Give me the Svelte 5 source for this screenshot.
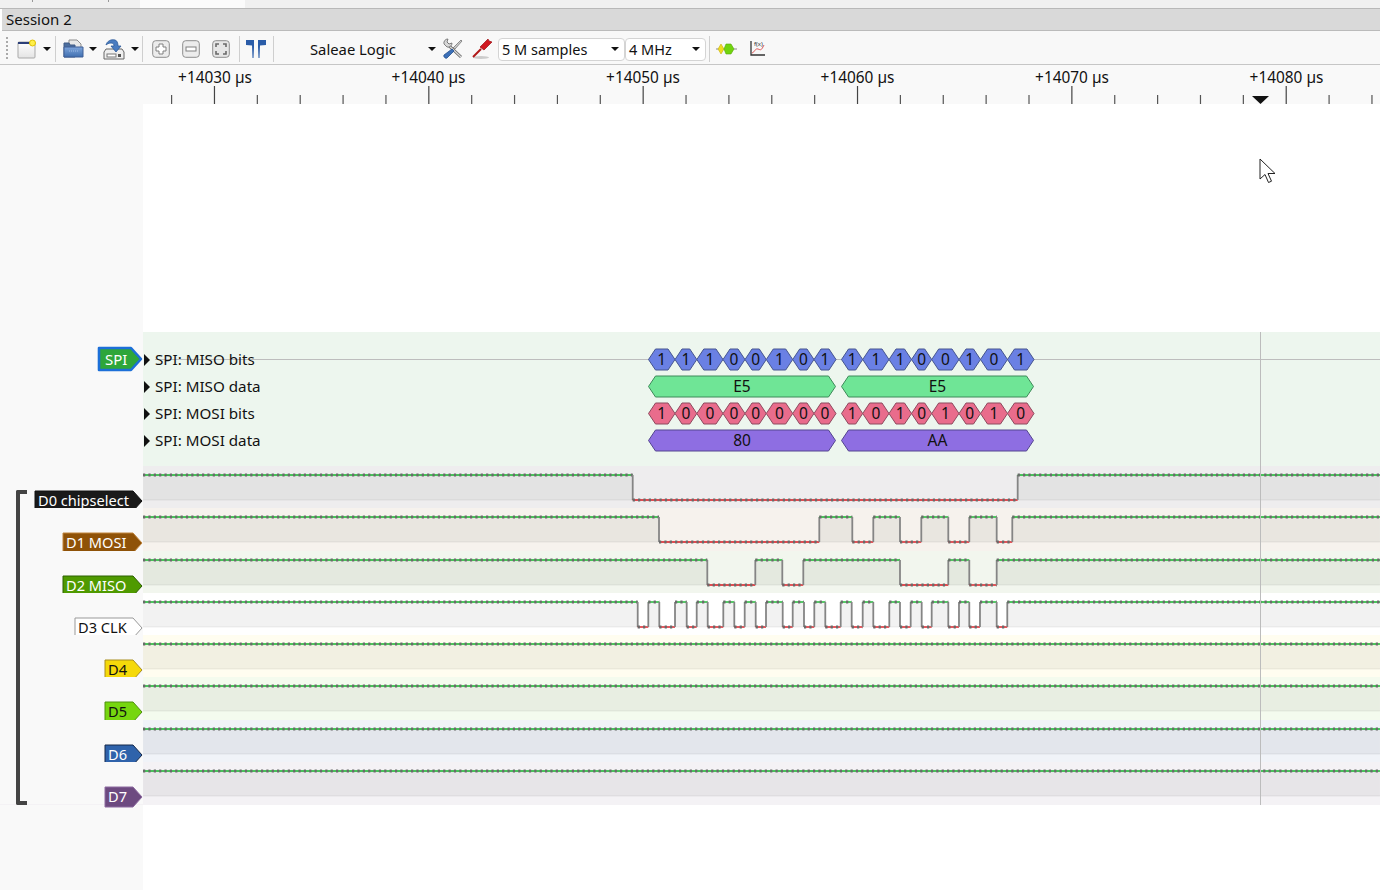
<script>
  const LEFT = 143;
  const ROW_H = 42.3;
  const HIGH_Y = 9;
  const LOW_Y = 34;

  // ruler: one minor tick every 2 us
  const ticks = [];
  for (let i = 0; i < 29; i++) {
    const x = 171.6 + i * 42.87;
    ticks.push({ x, major: (i - 1) % 5 === 0 });
  }
  const rulerLabels = [
    { x: 215, text: '+14030 µs' },
    { x: 428.5, text: '+14040 µs' },
    { x: 643, text: '+14050 µs' },
    { x: 857.5, text: '+14060 µs' },
    { x: 1072, text: '+14070 µs' },
    { x: 1286.5, text: '+14080 µs' }
  ];

  const bitEdges = [648.5, 675, 696.8, 723, 745, 766.3, 792.7, 814, 836];
  const bitEdges2 = [841.5, 862.7, 889, 911.5, 931.7, 959, 980.5, 1007.5, 1034];

  function bits(str, edges) {
    return str.split('').map((text, i) => ({ text, x0: edges[i], x1: edges[i + 1] }));
  }

  const analyzers = [
    {
      name: 'SPI: MISO bits', kind: 'bits', line: true,
      cells: [...bits('11100101', bitEdges), ...bits('11100101', bitEdges2)]
    },
    {
      name: 'SPI: MISO data', kind: 'miso',
      cells: [{ text: 'E5', x0: 648.5, x1: 835.5 }, { text: 'E5', x0: 841.5, x1: 1033.5 }]
    },
    {
      name: 'SPI: MOSI bits', kind: 'mosi',
      cells: [...bits('10000000', bitEdges), ...bits('10101010', bitEdges2)]
    },
    {
      name: 'SPI: MOSI data', kind: 'data',
      cells: [{ text: '80', x0: 648.5, x1: 835.5 }, { text: 'AA', x0: 841.5, x1: 1033.5 }]
    }
  ];

  const channels = [
    { label: 'D0 chipselect', w: 109, tag: 'black', band: 'b0', edges: [632.7, 1017.7] },
    {
      label: 'D1 MOSI', w: 81, tag: 'brown', band: 'b1',
      edges: [659, 819.3, 852.3, 873.3, 900, 921.3, 948.3, 969.3, 996.7, 1012.3]
    },
    {
      label: 'D2 MISO', w: 81, tag: 'green', band: 'b2',
      edges: [707.3, 755.3, 782.3, 803.3, 900, 948.3, 969.3, 996.7]
    },
    {
      label: 'D3 CLK', w: 69, tag: 'white', band: 'b3',
      edges: [
        637.7, 648.3, 659.3, 675, 686.7, 696.7, 707.7, 723.3, 734.3, 744.7, 755.7, 766, 782.7, 792.7, 804, 814.3,
        825.3, 840.7, 851.7, 862.7, 873.3, 889.3, 900, 910.7, 921.7, 931.7, 948.3, 959, 969.3, 980, 996.7, 1007.3
      ]
    },
    { label: 'D4', w: 39, tag: 'yellow', band: 'b4', edges: [] },
    { label: 'D5', w: 39, tag: 'lime', band: 'b5', edges: [] },
    { label: 'D6', w: 39, tag: 'blue', band: 'b6', edges: [] },
    { label: 'D7', w: 39, tag: 'purple', band: 'b7', edges: [] }
  ];

  // channels all idle high, every edge in the list toggles the level
  function segments(edges) {
    const out = [];
    let from = LEFT;
    let high = true;
    for (const x of [...edges, 1380]) {
      out.push({ x0: from, x1: x, high });
      from = x;
      high = !high;
    }
    return out;
  }

  function hexPoints(c) {
    const tip = 7;
    const t = 3;
    const b = 24;
    const m = 13.5;
    return `${c.x0},${m} ${c.x0 + tip},${t} ${c.x1 - tip},${t} ${c.x1},${m} ${c.x1 - tip},${b} ${c.x0 + tip},${b}`;
  }

  function tagPoints(w) {
    return `1,1 ${w - 10},1 ${w - 1},11 ${w - 10},21 1,21`;
  }
</script>

<div class="app">
  <div class="tabs"><span class="tab-mark one"></span><span class="tab-mark two"></span><div class="tab-on"></div></div>
  <div class="session">Session 2</div>

  <div class="toolbar">
    <span class="grip"></span>
    <svg class="i-new" width="20" height="20" viewBox="0 0 20 20">
      <defs>
        <linearGradient id="pg" x1="0" y1="0" x2="0" y2="1"><stop offset="0" stop-color="#fff" /><stop offset="1" stop-color="#e4e4e4" /></linearGradient>
        <linearGradient id="fd" x1="0" y1="0" x2="0" y2="1"><stop offset="0" stop-color="#7fa6dc" /><stop offset="1" stop-color="#3f6fb0" /></linearGradient>
      </defs>
      <rect x="1" y="3" width="17" height="16" rx="1" fill="url(#pg)" stroke="#a9a9a9" />
      <path d="M1 4h15" stroke="#2b3f78" stroke-width="2" />
      <circle cx="15.5" cy="4" r="3" fill="#fff04a" stroke="#e0c000" />
    </svg>
    <span class="caret c-new"></span>
    <span class="sep s1"></span>
    <svg class="i-open" width="21" height="20" viewBox="0 0 21 20">
      <path d="M6 1h8l4 4v4H6z" fill="#e8e8e8" stroke="#8c8c8c" />
      <path d="M1 4h5l1 2h5v12H1z" fill="#4d6f9e" stroke="#3e5a85" />
      <path d="M1 8h19v10H1z" fill="url(#fd)" stroke="#3e5f96" />
      <path d="M6 12h10" stroke="#9dbbe5" stroke-dasharray="1 1" />
    </svg>
    <span class="caret c-open"></span>
    <svg class="i-save" width="22" height="22" viewBox="0 0 22 22">
      <path d="M3 11h16l2 3v7H1v-7z" fill="#efefef" stroke="#666" />
      <rect x="4" y="16" width="9" height="3" fill="#fff" stroke="#777" />
      <rect x="15" y="16" width="3" height="3" fill="#555" />
      <path d="M3 7c1-4 5-6 9-5 2 .5 3 3 3 6h3l-5 6-5-6h3c0-2-1-3-3-3-2 0-4 1-5 2z" fill="#4a7cc0" stroke="#2d5a99" stroke-width=".8" />
    </svg>
    <span class="caret c-save"></span>
    <span class="sep s2"></span>
    <svg class="zoom z1" width="18" height="18" viewBox="0 0 18 18">
      <rect x=".7" y=".7" width="16.6" height="16.6" rx="3" fill="#ececec" stroke="#8e8e8e" />
      <path d="M7 4h4v3h3v4h-3v3H7v-3H4V7h3z" fill="#fff" stroke="#808080" />
    </svg>
    <svg class="zoom z2" width="18" height="18" viewBox="0 0 18 18">
      <rect x=".7" y=".7" width="16.6" height="16.6" rx="3" fill="#ececec" stroke="#8e8e8e" />
      <rect x="4" y="7" width="10" height="4" fill="#fff" stroke="#808080" />
    </svg>
    <svg class="zoom z3" width="18" height="18" viewBox="0 0 18 18">
      <rect x=".7" y=".7" width="16.6" height="16.6" rx="3" fill="#e6e6e6" stroke="#8e8e8e" />
      <path d="M4 7V4h3M11 4h3v3M14 11v3h-3M7 14H4v-3" fill="none" stroke="#6a6a6a" stroke-width="1.6" />
    </svg>
    <span class="sep s3"></span>
    <svg class="i-flags" width="23" height="20" viewBox="0 0 23 20">
      <path d="M1 1h8v7l-.5 11h-1L7 6.500 1 6z" fill="#2a5ca8" />
      <path d="M13 1h8v5l-6 .5-.5 12.500h-1L13 8z" fill="#2a5ca8" />
    </svg>
    <span class="sep s4"></span>
    <div class="device"><span>Saleae Logic</span><span class="caret"></span></div>
    <svg class="i-tools" width="22" height="22" viewBox="0 0 22 22">
      <path d="M3 4l16 15" stroke="#666" stroke-width="3" />
      <path d="M3 4l16 15" stroke="#ddd" stroke-width="1.2" />
      <path d="M2 6a4 4 0 0 1 4-5L5 4l2 2 3-1a4 4 0 0 1-5 4z" fill="#d8d8d8" stroke="#666" stroke-width=".8" />
      <path d="M19 2l1 1-7 8-2-1z" fill="#ccc" stroke="#666" stroke-width=".7" />
      <path d="M10 11l2 2-7 7c-1 1-4-1-3-3z" fill="#3c70b8" stroke="#234f8d" stroke-width=".8" />
    </svg>
    <svg class="i-probe" width="22" height="22" viewBox="0 0 22 22">
      <ellipse cx="9" cy="19.500" rx="8" ry="1.500" fill="#ccc" />
      <path d="M1 19l8-8" stroke="#b01818" stroke-width="2" />
      <path d="M8 9l6-6 2-2 1 2 3 1-2 2-6 6z" fill="#d01820" stroke="#9a1014" stroke-width=".7" />
    </svg>
    <div class="combo samples"><span>5 M samples</span><span class="caret"></span></div>
    <div class="combo rate"><span>4 MHz</span><span class="caret"></span></div>
    <span class="sep s5"></span>
    <svg class="i-analyzer" width="21" height="12" viewBox="0 0 21 12">
      <path d="M0 6h21" stroke="#8a8a8a" />
      <path d="M5 1l3 5-3 5-3-5z" fill="#f0dc20" stroke="#c8b010" stroke-width=".6" />
      <path d="M10 1h5l3 5-3 5h-5L8 6z" fill="#71d40e" stroke="#58aa08" stroke-width=".6" />
    </svg>
    <svg class="i-fx" width="18" height="18" viewBox="0 0 18 18">
      <path d="M3 1v14h14" fill="none" stroke="#333" stroke-width="1.3" />
      <path d="M4 13c3-1 3-5 6-4s3 2 6-4" fill="none" stroke="#e05a5a" />
      <text x="6" y="6" class="fx">f(x)</text>
    </svg>
  </div>

  <div class="view">
    <div class="row">
      <div class="rail"></div>
      <svg class="ruler" width="1237" height="39" viewBox="{LEFT} 65 1237 39">
        {#each rulerLabels as l}
          <text x={l.x} y="83" text-anchor="middle" class="tick-text">{l.text}</text>
        {/each}
        {#each ticks as t}
          <path d="M{t.x} {t.major ? 86 : 95}V104" stroke={t.major ? '#444' : '#555'} stroke-width="1.2" />
        {/each}
        <path d="M1252 96h17l-8.500 8z" fill="#111" />
      </svg>
    </div>

    <div class="row empty">
      <div class="rail"></div>
      <div class="lane">
        <svg class="pointer" width="18" height="27" viewBox="0 0 18 27">
          <path d="M1 1v20l5-4.500 3.500 8 3-1.300-3.500-7.700h7z" fill="#fff" stroke="#222" stroke-width="1" />
        </svg>
      </div>
    </div>

    <div class="signals">
      <div class="row"><div class="rail"></div><div class="lane band-top"></div></div>
      {#each analyzers as a, i}
        <div class="row">
          <div class="rail spi-rail">
            {#if i === 0}
              <svg width="46" height="26" viewBox="0 0 46 26" class="spi-tag">
                <polygon points="2,2 34,2 44,13 34,24 2,24" fill="#2ea63a" stroke="#1c6fd8" stroke-width="2.600" stroke-linejoin="round" />
                <text x="8" y="18.500" fill="#fff">SPI</text>
              </svg>
            {/if}
          </div>
          <div class="lane analyzer">
            {#if a.line}<span class="base"></span>{/if}
            <span class="arrow"></span>
            <span class="name">{a.name}</span>
            <svg class="cells" width="1237" height="27" viewBox="{LEFT} 0 1237 27">
              {#each a.cells as c}
                <polygon points={hexPoints(c)} class={a.kind} />
                <text x={(c.x0 + c.x1) / 2} y="19" text-anchor="middle" class="cell-text">{c.text}</text>
              {/each}
            </svg>
          </div>
        </div>
      {/each}
      <div class="row"><div class="rail"></div><div class="lane band-bottom"></div></div>

      <div class="channels">
        <div class="bracket"></div>
        {#each channels as ch}
          <div class="row">
            <div class="rail tag-rail">
              <svg width={ch.w} height="22" viewBox="0 0 {ch.w} 22" class="tag {ch.tag}">
                <polygon points={tagPoints(ch.w)} />
                <text x="4" y="16">{ch.label}</text>
              </svg>
            </div>
            <svg class="trace {ch.band}" width="1237" height={ROW_H} viewBox="{LEFT} 0 1237 {ROW_H}">
              {#each segments(ch.edges) as s}
                {#if s.high}
                  <rect x={s.x0} y={HIGH_Y} width={s.x1 - s.x0} height={LOW_Y - HIGH_Y} class="fill" />
                  <path d="M{s.x0} {LOW_Y}H{s.x1}" class="floor" />
                {/if}
              {/each}
              {#each segments(ch.edges) as s, i}
                {#if i > 0}
                  <path d="M{s.x0} {HIGH_Y}V{LOW_Y}" class="edge" />
                {/if}
                <path d="M{s.x0} {s.high ? HIGH_Y : LOW_Y}H{s.x1}" class={s.high ? 'hi' : 'lo'} />
                <path d="M{s.x0} {s.high ? HIGH_Y : LOW_Y}H{s.x1}" class="samples-dots" />
              {/each}
            </svg>
          </div>
        {/each}
      </div>

      <div class="cursor"></div>
    </div>

    <div class="row filler"><div class="rail"></div></div>
  </div>
</div>

<style>
  :global(body) {
    margin: 0;
    background: #fff;
  }
  .app {
    width: 1380px;
    height: 890px;
    display: flex;
    flex-direction: column;
    overflow: hidden;
    font-family: "Noto Sans", sans-serif;
    font-size: 15px;
    color: #111;
  }

  /* top chrome */
  .tabs {
    height: 8px;
    background: #f0f0f0;
    border-bottom: 1px solid #b8b8b8;
    position: relative;
    flex: none;
  }
  .tab-on {
    position: absolute;
    left: 140px;
    top: 0;
    width: 105px;
    height: 8px;
    background: #fbfbfb;
  }
  .tab-mark {
    position: absolute;
    top: 0;
    width: 1px;
    height: 2px;
    background: #999;
  }
  .tab-mark.one { left: 32px; }
  .tab-mark.two { left: 108px; }
  .session {
    flex: none;
    height: 21px;
    line-height: 21px;
    margin-left: 2px;
    padding-left: 4px;
    background: #d9d9d9;
    border-bottom: 1px solid #bbb;
    color: #111;
  }
  .toolbar {
    flex: none;
    box-sizing: border-box;
    height: 34px;
    padding-top: 3px;
    display: flex;
    align-items: center;
    background: #f8f8f8;
    border-bottom: 1px solid #c6c6c6;
  }
  .toolbar svg { flex: none; }
  .grip {
    width: 2px;
    height: 24px;
    margin-left: 6px;
    background: repeating-linear-gradient(#aaa 0 2px, transparent 2px 4px);
  }
  .caret {
    width: 0;
    height: 0;
    border: 4px solid transparent;
    border-top: 4px solid #111;
    border-bottom: 0;
    flex: none;
  }
  .sep {
    width: 1px;
    height: 26px;
    background: #cfcfcf;
    flex: none;
  }
  .i-new { margin-left: 9px; }
  .c-new { margin-left: 6px; }
  .s1 { margin-left: 4px; }
  .i-open { margin-left: 7px; }
  .c-open { margin-left: 5px; }
  .i-save { margin-left: 6px; }
  .c-save { margin-left: 6px; }
  .s2 { margin-left: 3px; }
  .z1 { margin-left: 9px; }
  .z2, .z3 { margin-left: 12px; }
  .s3 { margin-left: 9px; }
  .i-flags { margin-left: 5px; }
  .s4 { margin-left: 5px; }
  .device {
    width: 126px;
    margin-left: 36px;
    display: flex;
    justify-content: space-between;
    align-items: center;
    font-size: 14.800px;
  }
  .i-tools { margin-left: 6px; }
  .i-probe { margin-left: 8px; }
  .combo {
    height: 23px;
    box-sizing: border-box;
    display: flex;
    justify-content: space-between;
    align-items: center;
    padding: 0 5px 0 3px;
    background: #fff;
    border: 1px solid #d4d4d4;
    border-radius: 4px;
    flex: none;
    font-size: 14.500px;
  }
  .samples { width: 127px; margin-left: 4px; }
  .rate { width: 81px; }
  .s5 { margin-left: 3px; }
  .i-analyzer { margin-left: 6px; }
  .i-fx { margin-left: 11px; }
  .fx {
    font-size: 6px;
    fill: #333;
  }

  /* main view */
  .view {
    flex: 1;
    display: flex;
    flex-direction: column;
    min-height: 0;
  }
  .row {
    display: flex;
    flex: none;
  }
  .rail {
    width: 143px;
    flex: none;
    background: #f9f9f9;
    box-sizing: border-box;
  }
  .lane { flex: 1; min-width: 0; }
  .ruler {
    display: block;
    background: #f9f9f9;
  }
  .tick-text { fill: #111; font-size: 15.400px; }
  .empty { height: 228px; }
  .empty .lane { position: relative; }
  .pointer {
    position: absolute;
    left: 1116px;
    top: 54px;
  }
  .filler { flex: 1; }
  .signals { position: relative; flex: none; }
  .band-top { height: 14px; background: #edf6ee; }
  .band-bottom { height: 12px; background: #edf6ee; }
  .spi-rail {
    height: 27px;
    display: flex;
    justify-content: flex-end;
    align-items: flex-start;
  }
  .spi-tag {
    overflow: visible;
    font-size: 15px;
  }
  .analyzer {
    position: relative;
    height: 27px;
    background: #edf6ee;
    display: flex;
    align-items: center;
    line-height: 27px;
  }
  .arrow {
    width: 0;
    height: 0;
    margin-left: 1px;
    border-left: 6px solid #111;
    border-top: 6px solid transparent;
    border-bottom: 6px solid transparent;
    position: relative;
  }
  .name { margin-left: 5px; position: relative; font-size: 15.200px; }
  .base {
    position: absolute;
    left: 12px;
    right: 0;
    top: 13px;
    height: 1px;
    background: #bdbdbd;
  }
  .cells {
    position: absolute;
    left: 0;
    top: 0;
  }
  .cell-text { font-size: 15.500px; fill: #111; }
  polygon.bits { fill: #6a80e4; stroke: #46558f; }
  polygon.miso { fill: #6fe596; stroke: #3f8a5a; }
  polygon.mosi { fill: #e96c8c; stroke: #8d4a5e; }
  polygon.data { fill: #8e6ee2; stroke: #544690; }

  .channels {
    position: relative;
    padding-bottom: 1px;
    background: #f4f2f5;
  }
  .tag-rail {
    height: 42.300px;
    display: flex;
    justify-content: flex-end;
    align-items: flex-start;
    padding-top: 24px;
    overflow: visible;
  }
  .tag { flex: none; font-size: 14.600px; }
  .tag polygon { stroke-width: 1; }
  .tag.black polygon { fill: #1a1a1a; stroke: #111; }
  .tag.black text { fill: #fff; }
  .tag.brown polygon { fill: #8f5208; stroke: #c0843c; }
  .tag.brown text { fill: #fff; }
  .tag.green polygon { fill: #4f9a00; stroke: #2c6000; }
  .tag.green text { fill: #fff; }
  .tag.white polygon { fill: #fff; stroke: #999; }
  .tag.white text { fill: #111; }
  .tag.yellow polygon { fill: #f5d90a; stroke: #a88e20; }
  .tag.yellow text { fill: #111; }
  .tag.lime polygon { fill: #76d60f; stroke: #4f9010; }
  .tag.lime text { fill: #111; }
  .tag.blue polygon { fill: #2f63ab; stroke: #14284a; }
  .tag.blue text { fill: #fff; }
  .tag.purple polygon { fill: #6d4a80; stroke: #8d6aa0; }
  .tag.purple text { fill: #fff; }

  .trace { display: block; flex: none; }
  .b0 { background: #eeedee; --fill: #e3e3e3; }
  .b1 { background: #f6f2ed; --fill: #e9e6e0; }
  .b2 { background: #f2f6ee; --fill: #e4e9df; }
  .b3 { background: #fff; --fill: #f2f2f2; }
  .b4 { background: #fffdf0; --fill: #f2f0e2; }
  .b5 { background: #f4fbee; --fill: #e8eee2; }
  .b6 { background: #f0f3f8; --fill: #e3e6ec; }
  .b7 { background: #f4f2f5; --fill: #e7e5e8; }
  .fill { fill: var(--fill); }
  .floor { stroke: #00000012; stroke-width: 1; }
  .edge { stroke: #858585; stroke-width: 1.800; }
  .hi { stroke: #12b52a; stroke-width: 1.400; fill: none; }
  .lo { stroke: #d8141c; stroke-width: 1.400; fill: none; }
  .samples-dots {
    stroke: #6a6a6a;
    stroke-width: 2.800;
    stroke-dasharray: 2.200 3.160;
    fill: none;
  }

  .bracket {
    position: absolute;
    left: 16px;
    top: 24px;
    bottom: 0;
    width: 7px;
    border: 4px solid #444;
    border-right: 0;
    border-radius: 2px 0 0 2px;
  }
  .cursor {
    position: absolute;
    left: 1260px;
    top: 0;
    bottom: 0;
    width: 1px;
    background: #bcbcbc;
  }
</style>
